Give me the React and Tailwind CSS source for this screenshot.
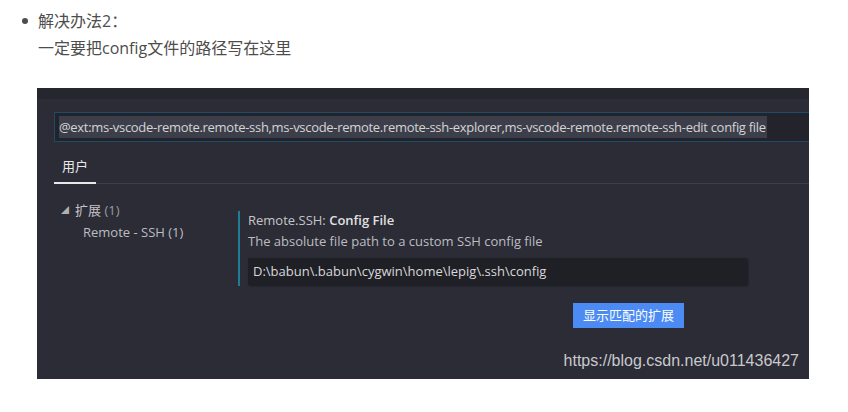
import React from 'react';

const cjk = '"Noto Sans CJK SC"';

export default function App() {
  return (
    <div className="w-[848px] h-[412px] bg-white overflow-hidden" style={{ fontFamily: `"Open Sans", ${cjk}, sans-serif` }}>
      <ul className="pt-[8px] pl-[38px] text-[16px] leading-[27px] text-[#4d4d4d]">
        <li className="relative">
          <span className="absolute left-[-16px] top-[10px] w-[6px] h-[6px] rounded-full bg-[#4d4d4d]" />
          <div>解决办法2：</div>
          <div>一定要把config文件的路径写在这里</div>
        </li>
      </ul>

      <div className="ml-[37px] mt-[26px] w-[772px] h-[291px] bg-[#2b2c36] flex flex-col text-[13px] text-[#c5c5c8]">
        <div className="h-[11px] bg-[#25262e]" />

        <div className="mt-[13px] ml-[17px] h-[30px] border-y border-l border-[#1c4c6a] bg-[#23242b] flex items-center pl-[4px]">
          <span className="bg-[#3c3f4a] text-[#d4d4d6] leading-[22px] pr-[1px] whitespace-nowrap tracking-[-0.3px]">
            @ext:ms-vscode-remote.remote-ssh,ms-vscode-remote.remote-ssh-explorer,ms-vscode-remote.remote-ssh-edit config file
          </span>
        </div>

        <div className="mt-[14px] ml-[17px] border-b border-[#3d3e48] flex">
          <div className="w-[42px] pl-[8px] pb-[6px] border-b-2 border-[#e8e8ea] -mb-[1px] text-[#e8e8ea] leading-[20px]">用户</div>
        </div>

        <div className="flex mt-[15px]">
          <div className="w-[201px] pl-[24px] leading-[22px]">
            <div className="flex items-center">
              <span className="text-[8px] text-[#b0b0b4] mr-[6px]">◢</span>
              <span>扩展 <span className="text-[#9b9ba0]">(1)</span></span>
            </div>
            <div className="pl-[22px] text-[#bdbdc1]">Remote - SSH (1)</div>
          </div>

          <div className="mt-[12px] border-l-2 border-[#1c7d94] pl-[8px] h-[75px] w-[512px]">
            <div className="leading-[18px]">
              Remote.SSH: <span className="font-semibold text-[#e0e0e2]">Config File</span>
            </div>
            <div className="leading-[20px] text-[#bdbdc1] mt-[2px]">The absolute file path to a custom SSH config file</div>
            <div className="mt-[7px] h-[27px] w-[499px] bg-[#1f1f26] shadow-[1px_1px_2px_rgba(0,0,0,0.4)] flex items-center pl-[5px] text-[#d8d8da]">
              D:\babun\.babun\cygwin\home\lepig\.ssh\config
            </div>
          </div>
        </div>

        <div className="mt-[17px] ml-[536px]">
          <div className="w-[111px] h-[25px] bg-[#4b8bf3] text-white text-[13px] flex items-center justify-center">显示匹配的扩展</div>
        </div>

        <div className="mt-[23px] pr-[10px] text-right text-[16px] leading-[20px] text-[#c9c9cc]" style={{ fontFamily: '"Liberation Sans", Arial, sans-serif' }}>
          https://blog.csdn.net/u011436427
        </div>
      </div>
    </div>
  );
}
